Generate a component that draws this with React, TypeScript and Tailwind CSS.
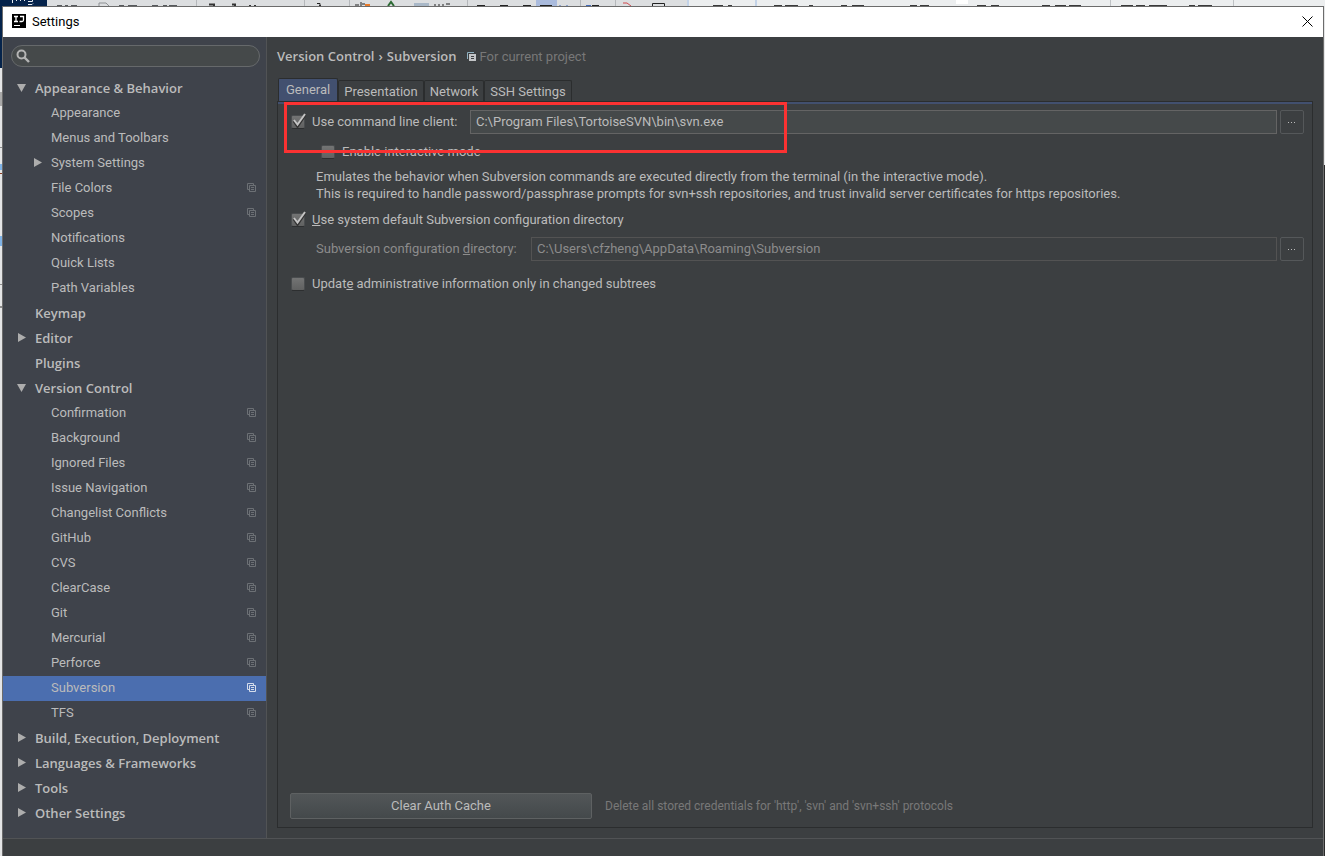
import { useState } from 'react';

type TreeItem = {
	label: string;
	level: 0 | 1;
	state?: 'open' | 'closed';
	project?: boolean;
};

const TREE: TreeItem[] = [
	{ label: 'Appearance & Behavior', level: 0, state: 'open' },
	{ label: 'Appearance', level: 1 },
	{ label: 'Menus and Toolbars', level: 1 },
	{ label: 'System Settings', level: 1, state: 'closed' },
	{ label: 'File Colors', level: 1, project: true },
	{ label: 'Scopes', level: 1, project: true },
	{ label: 'Notifications', level: 1 },
	{ label: 'Quick Lists', level: 1 },
	{ label: 'Path Variables', level: 1 },
	{ label: 'Keymap', level: 0 },
	{ label: 'Editor', level: 0, state: 'closed' },
	{ label: 'Plugins', level: 0 },
	{ label: 'Version Control', level: 0, state: 'open' },
	{ label: 'Confirmation', level: 1, project: true },
	{ label: 'Background', level: 1, project: true },
	{ label: 'Ignored Files', level: 1, project: true },
	{ label: 'Issue Navigation', level: 1, project: true },
	{ label: 'Changelist Conflicts', level: 1, project: true },
	{ label: 'GitHub', level: 1, project: true },
	{ label: 'CVS', level: 1, project: true },
	{ label: 'ClearCase', level: 1, project: true },
	{ label: 'Git', level: 1, project: true },
	{ label: 'Mercurial', level: 1, project: true },
	{ label: 'Perforce', level: 1, project: true },
	{ label: 'Subversion', level: 1, project: true },
	{ label: 'TFS', level: 1, project: true },
	{ label: 'Build, Execution, Deployment', level: 0, state: 'closed' },
	{ label: 'Languages & Frameworks', level: 0, state: 'closed' },
	{ label: 'Tools', level: 0, state: 'closed' },
	{ label: 'Other Settings', level: 0, state: 'closed' },
];

const TABS = ['General', 'Presentation', 'Network', 'SSH Settings'];

function Arrow({ state }: { state?: 'open' | 'closed' }) {
	return (
		<svg width="10" height="10" viewBox="0 0 10 10" fill="#adadad" aria-hidden="true">
			{state === 'open' && <path d="M0 1h9L4.500 9z" />}
			{state === 'closed' && <path d="M1 0v9L9 4.500z" />}
		</svg>
	);
}

function ProjectIcon() {
	return (
		<svg width="9" height="9" viewBox="0 0 9 9" fill="none" stroke="currentColor" aria-hidden="true">
			<path d="M2 6.5H.5v-6h6V2" />
			<path d="M2.5 2.5h6v6h-6zM4 4.5h3M4 6.5h3" />
		</svg>
	);
}

// Filled variant used next to the breadcrumb
function ProjectBadge() {
	return (
		<svg width="9" height="9" viewBox="0 0 9 9" fill="none" aria-hidden="true">
			<path d="M.5 7V.5H7" stroke="#8fb0c0" />
			<path d="M2 2h7v7H2z" fill="#c3c5c7" />
			<path d="M4 4.500h3M4 6.500h3" stroke="#3c3f41" />
		</svg>
	);
}

function Tree() {
	const [selected, setSelected] = useState('Subversion');
	return (
		<ul className="mt-[9px]">
			{TREE.map((item) => {
				const active = item.label === selected;
				return (
					<li key={item.label}>
						<button
							type="button"
							onClick={() => setSelected(item.label)}
							className={`flex h-[25px] w-full items-center gap-2 pr-2.5 pb-0.5 text-left ${
								item.level === 0 ? "pl-3.5 font-['Open_Sans',sans-serif] font-semibold" : 'pl-[30px]'
							} ${active ? 'bg-[#4b6eaf]' : ''}`}
						>
							<Arrow state={item.state} />
							<span className="flex-1 whitespace-nowrap">{item.label}</span>
							{item.project && (
								<span className={active ? 'text-[#d5dceb]' : 'text-[#6c7075]'}>
									<ProjectIcon />
								</span>
							)}
						</button>
					</li>
				);
			})}
		</ul>
	);
}

function Checkbox({ id, checked }: { id: string; checked?: boolean }) {
	return (
		<span className="relative flex size-3.5 shrink-0">
			<input
				id={id}
				type="checkbox"
				defaultChecked={checked}
				className="peer size-3.5 appearance-none rounded-xs border border-[#4a4d4f] border-b-[#2d2f30] bg-linear-to-b from-[#737474] to-[#606161]"
			/>
			<svg
				viewBox="0 0 16 16"
				fill="none"
				className="pointer-events-none absolute -top-0.5 left-0 hidden size-4 peer-checked:block"
				aria-hidden="true"
			>
				<path d="M3 8l3.5 5L14 2" stroke="#333" strokeWidth="3" />
				<path d="M3 7l3.5 4.5L14 1" stroke="#c4c4c4" strokeWidth="2" />
			</svg>
		</span>
	);
}

function BrowseButton({ label }: { label: string }) {
	return (
		<button
			type="button"
			aria-label={label}
			className="ml-[3px] flex h-6 w-6 shrink-0 items-center justify-center rounded-xs border border-[#55585a]"
		>
			<svg width="8" height="2" viewBox="0 0 8 2" fill="#bbbbbb" aria-hidden="true">
				<path d="M0 1h1v1H0zM3 1h1v1H3zM6 1h1v1H6z" />
			</svg>
		</button>
	);
}

// Slice of the editor toolbar that shows above the dialog.
function ToolbarSlice() {
	return (
		<div className="flex h-1.5 shrink-0 overflow-hidden bg-[#dcdee0]">
			<div className="w-[47px] shrink-0 bg-[#05234b]">
				<svg width="47" height="6" fill="none" stroke="#e8edf3" aria-hidden="true">
					<path d="M12.500 0v3M16.500 0v1M20.500 0v1M24.500 0v1M28 1.500h4.500V0M28 4.500h4l1-1" />
				</svg>
			</div>
			<svg width="640" height="6" className="shrink-0" aria-hidden="true">
				<path d="M149 0h1v6h-1zM257 0h1v6h-1zM302 0h1v6h-1zM420 0h1v6h-1zM533 0h1v6h-1zM568 0h1v6h-1z" fill="#b5b8bb" />
				<path d="M367 3h15v3h-15z" fill="#a9b8c8" />
				<path d="M489 0h21v6h-21z" fill="#aabbdd" />
				<path d="M10 5.500h5M18 5.500h3M24 5.500h6M72 5.500h5M81 5.500h9M105 5.500h6M116 5.500h4M122 5.500h8" stroke="#55585b" />
				<path d="M162 4.500h5v1.500M185 4.500h3v1.500M203 5v1M208 5v1M273 5v1" stroke="#333" strokeWidth="2" fill="none" />
				<path d="M52 6V3h7l3 3" stroke="#8d9093" fill="none" />
				<path d="M430 5.500h8M453 5.500h8M476 5.500h8M493 5.500h12M545 5.500h7" stroke="#222" />
				<path d="M270 3.500h3v2M308 5h4M314 2v4M315 4h3M388 4v2M392 4v2M396 4v2M399 4h4M605.500 6V3.500h12V6" stroke="#222" fill="none" />
				<path d="M341 6l3-4 3 4" stroke="#2d6b35" strokeWidth="2" fill="none" />
				<path d="M318 4h5v2h-5z" fill="#e87a2a" />
				<path d="M539 5.500h5M513 5v1M520 5v1" stroke="#4169b8" />
				<path d="M576 3l4 0 4 3" stroke="#d04a4f" fill="none" />
			</svg>
			<div className="flex-1 border-l-2 border-[#c3d3e8] bg-[#eceeef]">
				<svg width="640" height="6" aria-hidden="true">
					<path d="M66 0h2v6h-2z" fill="#c3d3e8" />
					<path d="M267 0h12v4h-12z" fill="#fff" />
					<path d="M421 0h1v6h-1zM544 0h1v6h-1z" fill="#bfc2c5" />
					<path d="M24 5.500h10M39 5.500h4M85 5.500h8M96 5.500h13M120 5.500h4M152 5.500h6M163 5.500h12M221 5.500h7M231 5.500h9M288 5.500h9M302 5.500h8M353 5.500h8M366 5.500h11M380 5.500h12M432 5.500h12M447 5.500h9M460 5.500h18M500 5.500h6M509 5.500h14" stroke="#3a3a3a" />
				</svg>
			</div>
		</div>
	);
}

export default function App() {
	const [tab, setTab] = useState('General');

	return (
		<div className="flex h-screen flex-col overflow-hidden bg-[#e4e5e6] font-[Roboto,'Noto_Sans_CJK_SC',sans-serif] text-[13px] leading-4 text-[#bbbbbb]">
			<ToolbarSlice />
			<div className="flex min-h-0 flex-1">
				<div className="flex w-[3px] flex-col border-r border-[#6c6c6c]">
					<div className="h-[62px] bg-[#05234b]" />
					<svg width="2" height="270" aria-hidden="true">
						<path d="M0 24h2v14H0z" fill="#a9a9a9" />
						<path d="M0 79h2v1H0zM0 216h2v1H0zM0 238h2v2H0z" fill="#8d8d8d" />
						<path d="M0 96h2v6H0zM0 168h2v10H0z" fill="#7fb2e6" />
						<path d="M0 105h2v1H0z" fill="#8a3b22" />
					</svg>
				</div>

				<section className="flex min-w-0 flex-1 flex-col border-t border-[#6c6c6c] bg-[#3c3f41]">
					<header className="flex h-[30px] shrink-0 items-center bg-white pr-2.5 pb-0.5 pl-[9px] text-black">
						<svg width="14" height="14" viewBox="0 0 14 14" aria-hidden="true">
							<path d="M0 0h14v14H0z" />
							<path d="M2 2.500h4M4 2.500v5M2 7.500h4M8 2.500h3.500v3.500q0 1.500-1.500 1.500H7.500" fill="none" stroke="#fff" strokeWidth="1.300" />
							<path d="M2 11h6v1H2z" fill="#fff" />
						</svg>
						<h1 className="ml-1.5 flex-1 pt-0.5">Settings</h1>
						<button type="button" aria-label="Close">
							<svg width="11" height="11" viewBox="0 0 11 11" stroke="#000" aria-hidden="true">
								<path d="M.5 .5l10 10M10.500 .5l-10 10" />
							</svg>
						</button>
					</header>

					<div className="flex min-h-0 flex-1">
						<nav className="w-[264px] shrink-0 border-r border-[#515355] bg-[#3f434b] pt-2">
							<div className="mr-1.5 ml-2 flex h-[22px] items-center rounded-full border border-[#66696b] bg-[#45494a] pl-1">
								<svg width="14" height="14" viewBox="0 0 14 14" fill="none" stroke="#b4b4b4" aria-hidden="true">
									<circle cx="5.500" cy="5.500" r="4" strokeWidth="2" />
									<path d="M8.500 8.500l4.500 4.500" strokeWidth="2.400" />
								</svg>
								<input type="search" aria-label="Search settings" className="min-w-0 flex-1 px-1 outline-none" />
							</div>
							<Tree />
						</nav>

						<main className="flex min-w-0 flex-1 flex-col px-2.5 pt-[11px] pb-2.5">
							<div className="flex h-4 items-center font-['Open_Sans',sans-serif] font-semibold">
								<span>Version Control</span>
								<span className="mx-1">›</span>
								<span>Subversion</span>
								<span className="ml-2.5">
									<ProjectBadge />
								</span>
								<span className="ml-1 pt-px font-[Roboto,sans-serif] font-normal text-[#787878]">For current project</span>
							</div>

							<div role="tablist" className="mt-3.5 flex h-[23px] shrink-0 items-end pl-px">
								{TABS.map((name) => (
									<button
										key={name}
										type="button"
										role="tab"
										aria-selected={name === tab}
										onClick={() => setTab(name)}
										className={
											name === tab
												? 'h-[23px] rounded-t-xs border border-b-0 border-[#2b2d2e] bg-[#42506f] px-[7px]'
												: 'h-[21px] rounded-t-xs border border-b-0 border-[#2b2d2e] px-[5px] pt-0.5'
										}
									>
										{name}
									</button>
								))}
							</div>

							<div className="relative flex min-h-0 flex-1 flex-col border border-[#2b2d2e]">
								<div className="h-0.5 shrink-0 bg-[#42506f]" />
								<div className="flex flex-1 flex-col pt-1.5 pr-2 pb-2 pl-3">
									<div className="flex h-6 items-center pl-px">
										<Checkbox id="use-client" checked />
										<label htmlFor="use-client" className="ml-[7px] w-[158px] whitespace-nowrap">
											Use command line client:
										</label>
										<input
											type="text"
											aria-label="Command line client path"
											defaultValue="C:\Program Files\TortoiseSVN\bin\svn.exe"
											className="h-6 min-w-0 flex-1 border border-[#646464] bg-[#45494a] px-[5px] pb-0.5 outline-none"
										/>
										<BrowseButton label="Browse for client" />
									</div>

									<div className="mt-2 flex h-5 items-center pl-[31px]">
										<Checkbox id="interactive" />
										<label htmlFor="interactive" className="ml-[7px]">
											Enable interactive mode
										</label>
									</div>

									<p className="mt-1.5 pl-[26px] leading-[17px]">
										Emulates the behavior when Subversion commands are executed directly from the terminal (in the interactive mode).
										<br />
										This is required to handle password/passphrase prompts for svn+ssh repositories, and trust invalid server certificates for https repositories.
									</p>

									<div className="mt-2 flex h-5 items-center pl-px">
										<Checkbox id="use-default" checked />
										<label htmlFor="use-default" className="ml-[7px]">
											<u>U</u>se system default Subversion configuration directory
										</label>
									</div>

									<div className="mt-[7px] flex h-6 items-center pl-[26px] text-[#8c8c8c]">
										<label htmlFor="config-dir" className="w-[215px] whitespace-nowrap">
											Subversion configuration <u>d</u>irectory:
										</label>
										<input
											id="config-dir"
											type="text"
											readOnly
											defaultValue="C:\Users\cfzheng\AppData\Roaming\Subversion"
											className="h-6 min-w-0 flex-1 border border-[#535353] px-[5px] pb-0.5 outline-none"
										/>
										<BrowseButton label="Browse for directory" />
									</div>

									<div className="mt-[13px] flex h-5 items-center pl-px">
										<Checkbox id="update-admin" />
										<label htmlFor="update-admin" className="ml-[7px]">
											Updat<u>e</u> administrative information only in changed subtrees
										</label>
									</div>

									<div className="mt-auto flex items-center">
										<button
											type="button"
											className="h-[26px] w-[302px] rounded-xs border border-[#5e6162] bg-linear-to-b from-[#525658] to-[#44494b]"
										>
											Clear Auth Cache
										</button>
										<span className="ml-[13px] text-xs text-[#787878]">
											Delete all stored credentials for 'http', 'svn' and 'svn+ssh' protocols
										</span>
									</div>
								</div>

								{/* highlight around the client path */}
								<div className="pointer-events-none absolute top-0 left-1.5 h-[51px] w-[503px] border-3 border-[#fb3232]" />
							</div>
						</main>
					</div>

					<footer className="h-[18px] shrink-0 border-t border-[#515355]" />
				</section>

				<div className="flex w-0.5 flex-col border-l border-[#6c6c6c]">
					<div className="h-[159px]" />
					<div className="flex-1 bg-[#2b2b2b]" />
				</div>
			</div>
		</div>
	);
}
